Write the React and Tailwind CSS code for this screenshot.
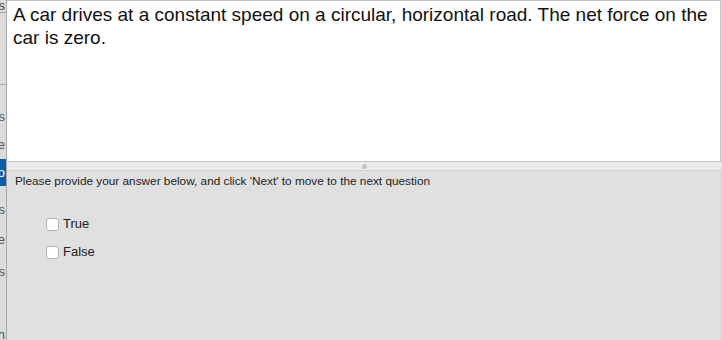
export default function App() {
  // visible slivers of the side list, with their row heights
  const sideRows = [
    { key: "gap1", text: "", h: "h-[18px]" },
    { key: "answers", text: "Answers", h: "h-[28px]" },
    { key: "scheme", text: "Scheme", h: "h-[28px]" },
    { key: "info", text: "Info", h: "h-[27px]", active: true },
    { key: "gap2", text: "", h: "h-[10px]" },
    { key: "settings", text: "Settings", h: "h-[28px]" },
    { key: "mode", text: "Mode", h: "h-[32px]" },
    { key: "notes", text: "Notes", h: "h-[32px]" },
    { key: "gap3", text: "", h: "h-[33px]" },
    { key: "each", text: "Each", h: "h-[28px]" },
  ];

  return (
    <div
      className="flex w-[722px] h-[340px] overflow-hidden bg-[#e0e0e0]"
      style={{ fontFamily: '"Liberation Sans", Arial, sans-serif' }}
    >
      {/* Cut-off side list */}
      <div className="w-[7px] shrink-0 flex flex-col bg-[#dcdcdc] border-r border-[#a9a9a9] overflow-hidden">
        <div className="h-[13px] shrink-0 border-b border-[#a0a0a0] flex justify-end items-center text-[13px] text-[#444] pr-[1px]">
          <span className="whitespace-nowrap">Questions</span>
        </div>
        <div className="h-[72px] shrink-0 border-b border-[#b0b0b0]" />
        {sideRows.map((r) => (
          <div
            key={r.key}
            className={`${r.h} shrink-0 flex justify-end items-center text-[13px] whitespace-nowrap pr-[1px] ${
              r.active ? "bg-[#0f5ca8] text-white" : "text-[#555]"
            }`}
          >
            <span>{r.text}</span>
          </div>
        ))}
      </div>

      <div className="flex-1 flex flex-col pr-[1px]">
        {/* Question box */}
        <div className="h-[162px] shrink-0 bg-white border-t border-r border-b border-[#c4c4c4] px-[6px] pt-[2px] text-[19px] leading-[23px] text-[#111]">
          A car drives at a constant speed on a circular, horizontal road. The net force on the car is zero.
        </div>

        {/* Splitter */}
        <div className="h-[9px] shrink-0 bg-[#ebebeb] border-b border-[#d2d2d2] flex justify-center items-center">
          <div className="w-[5px] h-[5px] rounded-full bg-[#c2c2c2]" />
        </div>

        {/* Answer panel */}
        <div className="flex-1 bg-[#e0e0e0] border-r border-[#d6d6d6]">
          <p className="pl-[8px] pt-[3px] text-[11.8px] leading-[14px] text-[#222]">
            Please provide your answer below, and click 'Next' to move to the next question
          </p>
          <div className="pl-[39px] pt-[29px] flex flex-col gap-[14px]">
            {["True", "False"].map((label) => (
              <label key={label} className="flex items-center gap-[4px] text-[13px] leading-[14px] text-[#222]">
                <span className="w-[13px] h-[13px] rounded-[3px] bg-white border border-[#b3b3b3]" />
                {label}
              </label>
            ))}
          </div>
        </div>
      </div>
    </div>
  );
}
